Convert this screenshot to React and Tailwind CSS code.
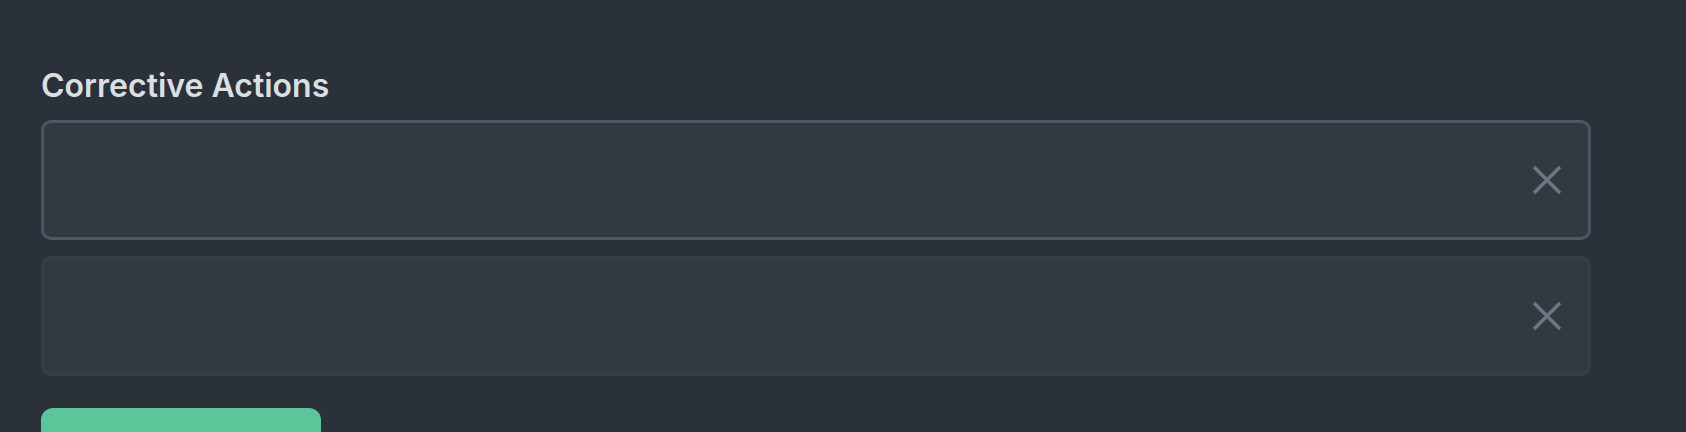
import React from 'react'

const CloseIcon = () => (
    <svg width="30" height="30" viewBox="0 0 30 30" fill="none" stroke="#6b7782" strokeWidth="3.4" strokeLinecap="butt">
        <path d="M2 2 L28 28 M28 2 L2 28" />
    </svg>
)

const ActionInput = ({ focused }) => (
    <div
        className={`flex items-center h-[120px] w-[1550px] rounded-[10px] bg-[#313a41] border-[3px] pr-[26px] ${focused ? 'border-[#4a5865]' : 'border-[#353f48]'}`}
    >
        <input
            type="text"
            className="flex-1 h-full bg-transparent outline-none px-6 text-[30px] text-[#dbe1e4]"
        />
        <button type="button" className="flex items-center justify-center">
            <CloseIcon />
        </button>
    </div>
)

const App = () => {
    return (
        <div className="w-full h-[432px] overflow-hidden bg-[#2a3138] pl-[41px] pt-[66px]" style={{ fontFamily: 'Inter, "Noto Sans", sans-serif' }}>
            <h3 className="text-[32px] leading-[40px] font-semibold text-[#d9dfe3] mb-[14px]">Corrective Actions</h3>
            <div className="flex flex-col gap-[16px]">
                <ActionInput focused />
                <ActionInput />
            </div>
            <button
                type="button"
                className="mt-[32px] w-[280px] h-[80px] rounded-[12px] bg-[#5bc69a]"
            />
        </div>
    )
}

export default App
